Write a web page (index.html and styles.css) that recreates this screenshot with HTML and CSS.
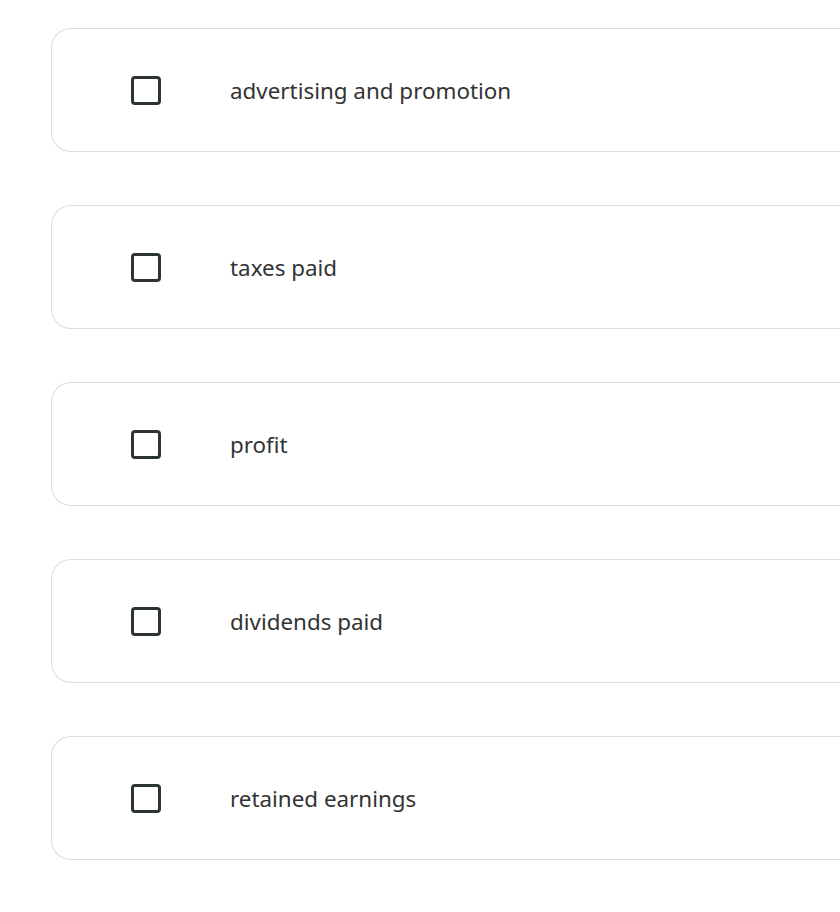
FILE: index.html
```html
<!DOCTYPE html>
<html lang="en">
<head>
<meta charset="utf-8">
<link rel="stylesheet" href="styles.css">
</head>
<body>
<ul class="options">
  <li class="option"><span class="box"></span><span class="label">advertising and promotion</span></li>
  <li class="option"><span class="box"></span><span class="label">taxes paid</span></li>
  <li class="option"><span class="box"></span><span class="label">profit</span></li>
  <li class="option"><span class="box"></span><span class="label">dividends paid</span></li>
  <li class="option"><span class="box"></span><span class="label">retained earnings</span></li>
</ul>
</body>
</html>
```
FILE: styles.css
```css
html, body {
  margin: 0;
  padding: 0;
  background: #fff;
}
.options {
  list-style: none;
  margin: 0;
  padding: 28px 0 0 51px;
  display: flex;
  flex-direction: column;
  gap: 53px;
}
.option {
  box-sizing: border-box;
  height: 124px;
  border: 1px solid #d8dfe0;
  border-right: none;
  border-radius: 20px 0 0 20px;
  display: flex;
  align-items: center;
  padding-left: 79px;
}
.box {
  box-sizing: border-box;
  width: 30px;
  height: 29px;
  border: 3px solid #2d3436;
  border-radius: 4px;
  flex: none;
}
.label {
  margin-left: 69px;
  font-family: "Noto Sans", "Open Sans", sans-serif;
  font-size: 22.4px;
  color: #333;
}
```
